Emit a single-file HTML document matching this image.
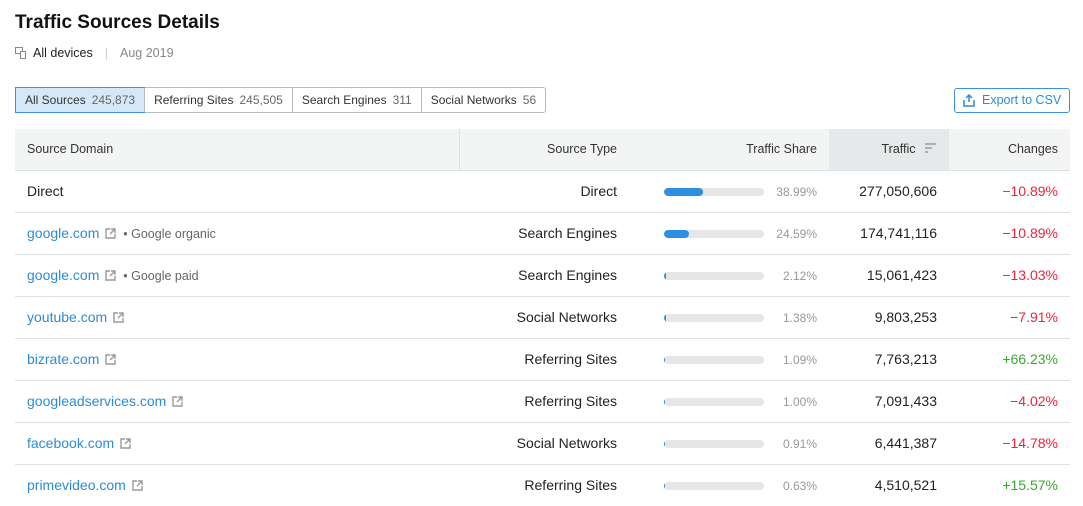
<!DOCTYPE html>
<html><head><meta charset="utf-8"><style>
*{margin:0;padding:0;box-sizing:border-box}
body{width:1083px;height:506px;background:#fff;font-family:"Liberation Sans","DejaVu Sans",sans-serif;color:#333;position:relative;overflow:hidden}
.abs{position:absolute}
h1{position:absolute;left:15px;top:12px;font-size:19px;font-weight:bold;color:#111}
.sub{position:absolute;left:15px;top:46px;font-size:12.5px;display:flex;align-items:center}
.tabs{position:absolute;left:15px;top:87px;height:26px;display:flex;border:1px solid #b8bcc0;border-radius:3px;font-size:12px}
.tab{height:24px;line-height:24px;padding:0 9px;border-left:1px solid #b8bcc0;color:#333;white-space:nowrap}
.tab:first-child{border-left:none}
.tab.on{background:#d5e8f8;outline:1px solid #3d92db;color:#333}
.tab span{color:#666;margin-left:6px}
.exp{position:absolute;left:954px;top:88px;width:116px;height:25px;border:1px solid #3d92db;border-radius:3px;color:#2e8ad8;font-size:12.5px;line-height:23px;padding-left:27px}
table{position:absolute;left:15px;top:129px;width:1055px;border-collapse:collapse;font-size:14px}
th{height:41px;background:#f3f4f4;font-weight:normal;font-size:12.5px;color:#333;border-bottom:1px solid #dde1e3;padding:0 12px}
td{height:42px;border-bottom:1px solid #dde1e3;padding:0 12px;color:#222}
.r{text-align:right}.l{text-align:left}
a{color:#2e8ad8;text-decoration:none}
.ext{display:inline-block;vertical-align:-1px;margin-left:6px;margin-right:3px}
.note{color:#666;font-size:12.5px}
.bar{display:inline-block;width:100px;height:8px;border-radius:4px;background:#e6e6e6;vertical-align:middle;overflow:hidden;position:relative}
.bar i{position:absolute;left:0;top:0;bottom:0;background:#2d8fe0;border-radius:4px}
.pct{display:inline-block;width:53px;text-align:right;color:#999;font-size:12px;vertical-align:middle}
.neg{color:#f2233a}.pos{color:#3aa82e}
</style></head><body>
<h1>Traffic Sources Details</h1>
<div class="sub"><svg width="12" height="12" viewBox="0 0 12 12" style="margin-right:6px"><rect x="0.5" y="0.5" width="7" height="6" fill="none" stroke="#888"/><rect x="5.5" y="4.5" width="5" height="7" fill="#fff" stroke="#888"/></svg><span style="color:#222">All devices</span><span style="margin:0 12px;color:#ccc">|</span><span style="color:#888">Aug 2019</span></div>
<div class="tabs">
<div class="tab on">All Sources<span>245,873</span></div>
<div class="tab">Referring Sites<span>245,505</span></div>
<div class="tab">Search Engines<span>311</span></div>
<div class="tab">Social Networks<span>56</span></div>
</div>
<div class="exp"><svg class="abs" style="left:8px;top:5px" width="12" height="13" viewBox="0 0 12 13"><path d="M6 1v7M3 4l3-3 3 3M1 6v6h10V6" fill="none" stroke="#2e8ad8" stroke-width="1.5"/></svg>Export to CSV</div>
<table>
<tr><th class="l" style="width:444px">Source Domain</th><th class="r" style="width:170px;border-left:1px solid #dde1e3">Source Type</th><th class="r" style="width:200px">Traffic Share</th><th class="r" style="width:120px;background:#e6e8e9">Traffic <svg width="12" height="10" viewBox="0 0 12 10" style="margin-left:6px"><path d="M0 1h11M0 5h7M0 9h3" stroke="#999" stroke-width="1.5"/></svg></th><th class="r" style="width:121px">Changes</th></tr>
<tr><td>Direct</td><td class="r">Direct</td><td class="r"><span class="bar"><i style="width:39px"></i></span><span class="pct">38.99%</span></td><td class="r">277,050,606</td><td class="r neg">−10.89%</td></tr>
<tr><td><a>google.com</a><svg class="ext" width="11" height="11" viewBox="0 0 11 11"><path d="M5 1H1v9h9V6M6 1h4v4M10 1L5 6" fill="none" stroke="#999" stroke-width="1.4"/></svg> <span class="note">• Google organic</span></td><td class="r">Search Engines</td><td class="r"><span class="bar"><i style="width:25px"></i></span><span class="pct">24.59%</span></td><td class="r">174,741,116</td><td class="r neg">−10.89%</td></tr>
<tr><td><a>google.com</a><svg class="ext" width="11" height="11" viewBox="0 0 11 11"><path d="M5 1H1v9h9V6M6 1h4v4M10 1L5 6" fill="none" stroke="#999" stroke-width="1.4"/></svg> <span class="note">• Google paid</span></td><td class="r">Search Engines</td><td class="r"><span class="bar"><i style="width:2px"></i></span><span class="pct">2.12%</span></td><td class="r">15,061,423</td><td class="r neg">−13.03%</td></tr>
<tr><td><a>youtube.com</a><svg class="ext" width="11" height="11" viewBox="0 0 11 11"><path d="M5 1H1v9h9V6M6 1h4v4M10 1L5 6" fill="none" stroke="#999" stroke-width="1.4"/></svg></td><td class="r">Social Networks</td><td class="r"><span class="bar"><i style="width:1.5px"></i></span><span class="pct">1.38%</span></td><td class="r">9,803,253</td><td class="r neg">−7.91%</td></tr>
<tr><td><a>bizrate.com</a><svg class="ext" width="11" height="11" viewBox="0 0 11 11"><path d="M5 1H1v9h9V6M6 1h4v4M10 1L5 6" fill="none" stroke="#999" stroke-width="1.4"/></svg></td><td class="r">Referring Sites</td><td class="r"><span class="bar"><i style="width:1px"></i></span><span class="pct">1.09%</span></td><td class="r">7,763,213</td><td class="r pos">+66.23%</td></tr>
<tr><td><a>googleadservices.com</a><svg class="ext" width="11" height="11" viewBox="0 0 11 11"><path d="M5 1H1v9h9V6M6 1h4v4M10 1L5 6" fill="none" stroke="#999" stroke-width="1.4"/></svg></td><td class="r">Referring Sites</td><td class="r"><span class="bar"><i style="width:1px"></i></span><span class="pct">1.00%</span></td><td class="r">7,091,433</td><td class="r neg">−4.02%</td></tr>
<tr><td><a>facebook.com</a><svg class="ext" width="11" height="11" viewBox="0 0 11 11"><path d="M5 1H1v9h9V6M6 1h4v4M10 1L5 6" fill="none" stroke="#999" stroke-width="1.4"/></svg></td><td class="r">Social Networks</td><td class="r"><span class="bar"><i style="width:1px"></i></span><span class="pct">0.91%</span></td><td class="r">6,441,387</td><td class="r neg">−14.78%</td></tr>
<tr><td style="border-bottom:none"><a>primevideo.com</a><svg class="ext" width="11" height="11" viewBox="0 0 11 11"><path d="M5 1H1v9h9V6M6 1h4v4M10 1L5 6" fill="none" stroke="#999" stroke-width="1.4"/></svg></td><td class="r" style="border-bottom:none">Referring Sites</td><td class="r" style="border-bottom:none"><span class="bar"><i style="width:1px"></i></span><span class="pct">0.63%</span></td><td class="r" style="border-bottom:none">4,510,521</td><td class="r pos" style="border-bottom:none">+15.57%</td></tr>
</table>
</body></html>
